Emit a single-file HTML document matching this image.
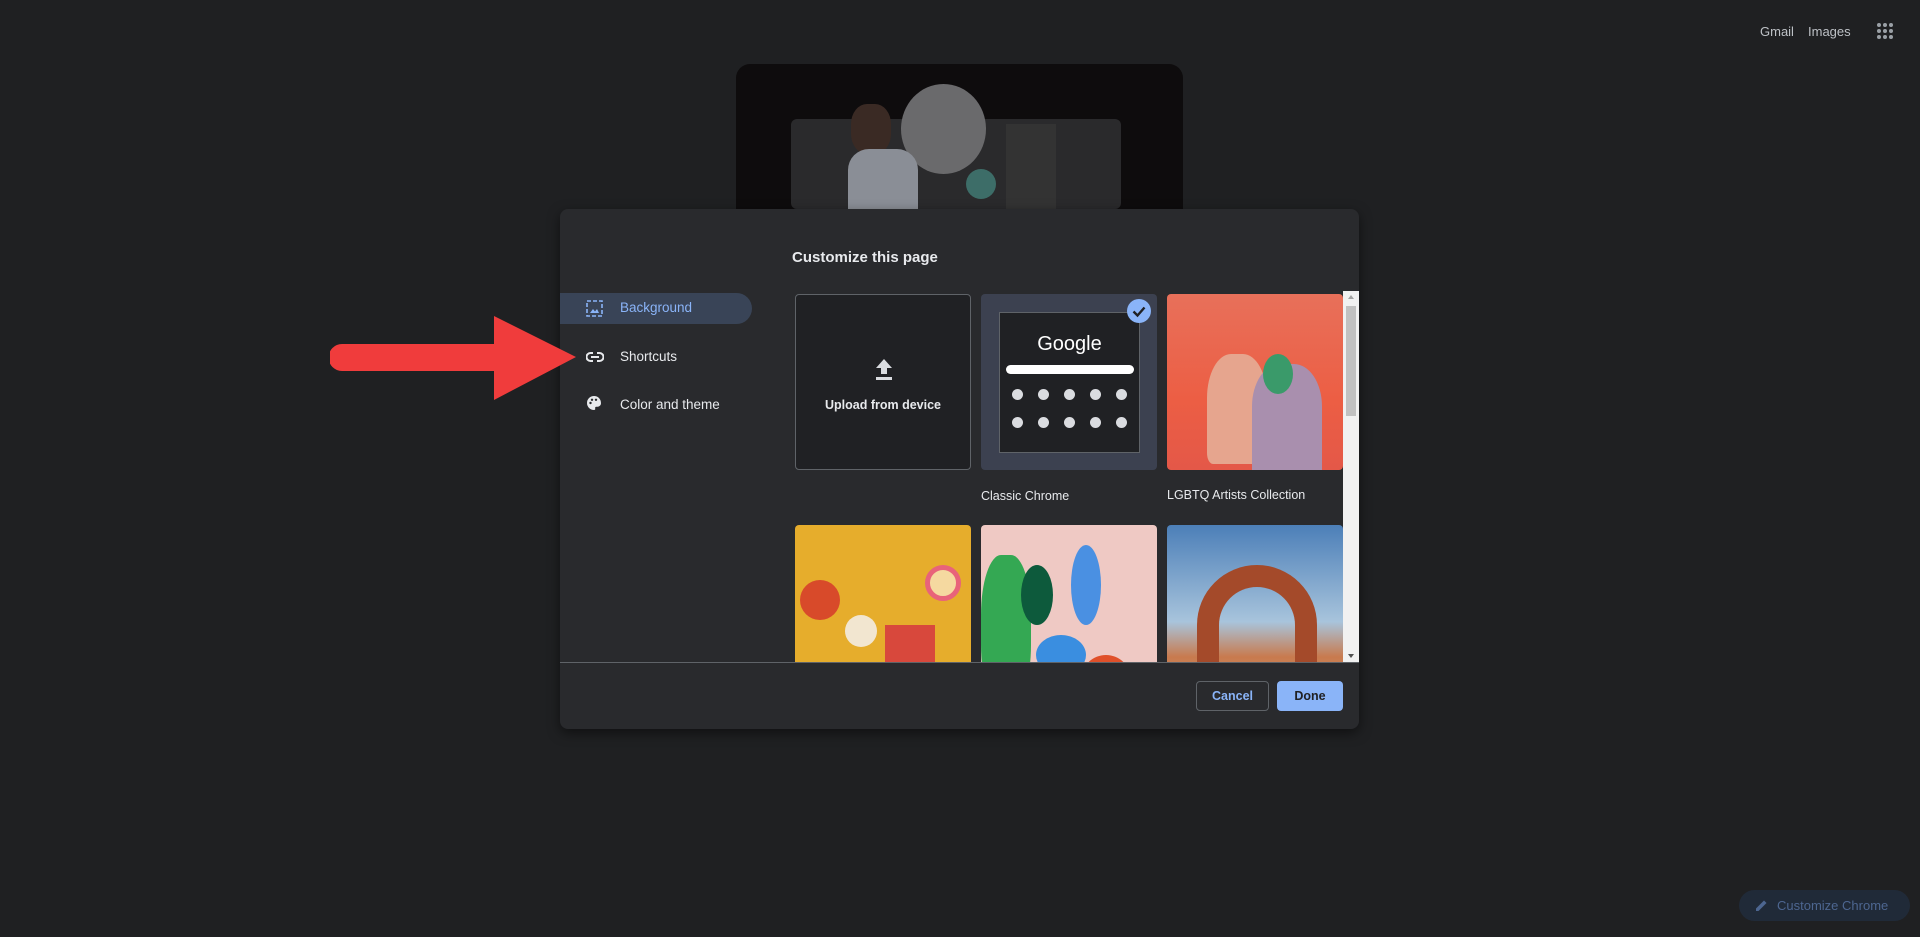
<!DOCTYPE html>
<html><head><meta charset="utf-8"><style>
*{margin:0;padding:0;box-sizing:border-box}
body{width:1920px;height:937px;background:#1f2022;font-family:"Liberation Sans",sans-serif;position:relative;overflow:hidden;color:#e8eaed}
.abs{position:absolute}
.top{font-size:13px;color:#bdc1c6;top:24px}
.dlg{left:560px;top:209px;width:799px;height:520px;background:#292a2d;border-radius:8px;box-shadow:0 4px 12px rgba(0,0,0,.5)}
.nav{font-size:13.5px;color:#e8eaed}
.tile{position:absolute;width:176px;height:176px;border-radius:4px;overflow:hidden}
.lbl{position:absolute;font-size:12.5px;color:#e8eaed}
.dot{position:absolute;width:11px;height:11px;border-radius:50%;background:#dadce0}
</style></head><body>
<div class="abs top" style="left:1760px">Gmail</div>
<div class="abs top" style="left:1808px">Images</div>
<svg class="abs" style="left:1876px;top:22px" width="18" height="18"><g fill="#9aa0a6"><circle cx="3" cy="3" r="2"/><circle cx="9" cy="3" r="2"/><circle cx="15" cy="3" r="2"/><circle cx="3" cy="9" r="2"/><circle cx="9" cy="9" r="2"/><circle cx="15" cy="9" r="2"/><circle cx="3" cy="15" r="2"/><circle cx="9" cy="15" r="2"/><circle cx="15" cy="15" r="2"/></g></svg>

<div class="abs" style="left:736px;top:64px;width:447px;height:160px;background:#0e0c0d;border-radius:14px;overflow:hidden">
 <div class="abs" style="left:55px;top:55px;width:330px;height:90px;background:#2a2a2c;border-radius:6px"></div>
 <div class="abs" style="left:165px;top:20px;width:85px;height:90px;border-radius:50%;background:#6a6a6c"></div>
 <div class="abs" style="left:115px;top:40px;width:40px;height:50px;border-radius:40%;background:#3a2a24"></div>
 <div class="abs" style="left:112px;top:85px;width:70px;height:70px;border-radius:30% 30% 0 0;background:#8a8e96"></div>
 <div class="abs" style="left:230px;top:105px;width:30px;height:30px;border-radius:50%;background:#3d6d68"></div>
 <div class="abs" style="left:270px;top:60px;width:50px;height:90px;background:#333"></div>
</div>

<div class="abs dlg">
 <div class="abs" style="left:232px;top:40px;font-size:15px;font-weight:bold;color:#e8eaed">Customize this page</div>
 <div class="abs" style="left:0;top:84px;width:192px;height:31px;background:#394457;border-radius:0 16px 16px 0"></div>
 <svg class="abs" style="left:26px;top:91px" width="17" height="17" viewBox="0 0 17 17"><rect x="1" y="1" width="15" height="15" fill="none" stroke="#8ab4f8" stroke-width="1.6" stroke-dasharray="4 2"/><path d="M4 13 L7 9 L9 11.5 L11 9 L13 13Z" fill="#8ab4f8"/></svg>
 <div class="abs nav" style="left:60px;top:91px;color:#8ab4f8">Background</div>
 <svg class="abs" style="left:26px;top:142px" width="18" height="12" viewBox="0 0 18 12"><path d="M7 2H4.5a4 4 0 0 0 0 8H7M11 2h2.5a4 4 0 0 1 0 8H11M5 6h8" fill="none" stroke="#e8eaed" stroke-width="2"/></svg>
 <div class="abs nav" style="left:60px;top:140px">Shortcuts</div>
 <svg class="abs" style="left:26px;top:186px" width="16" height="16" viewBox="0 0 16 16"><path d="M8 1a7 7 0 0 0 0 14c1 0 1.5-.7 1.2-1.5-.4-.9.2-1.8 1.2-1.8H12a3.5 3.5 0 0 0 3-3.5C15 4 12 1 8 1Z" fill="#e8eaed"/><circle cx="4.5" cy="8" r="1.2" fill="#292a2d"/><circle cx="6" cy="4.8" r="1.2" fill="#292a2d"/><circle cx="10" cy="4.8" r="1.2" fill="#292a2d"/></svg>
 <div class="abs nav" style="left:60px;top:188px">Color and theme</div>

 <div class="abs" style="left:0;top:82px;width:799px;height:371px;overflow:hidden">
  <div class="tile" style="left:235px;top:3px;border:1px solid #5f6368;background:#202124">
   <svg class="abs" style="left:78px;top:64px" width="20" height="22" viewBox="0 0 20 22"><path d="M10 0L2 9h5v6h6V9h5Z" fill="#dadce0"/><rect x="2" y="18" width="16" height="3" fill="#dadce0"/></svg>
   <div class="abs" style="left:0;width:174px;top:103px;text-align:center;font-size:12.5px;font-weight:bold">Upload from device</div>
  </div>
  <div class="tile" style="left:421px;top:3px;background:#3c4150">
   <div class="abs" style="left:18px;top:18px;width:141px;height:141px;background:#202124;border:1px solid #5f6368">
    <div class="abs" style="left:0;width:139px;top:20px;text-align:center;font-size:20px;color:#fff">Google</div>
    <div class="abs" style="left:6px;top:52px;width:128px;height:9px;border-radius:5px;background:#fff"></div>
    <div class="dot" style="left:12px;top:76px"></div><div class="dot" style="left:38px;top:76px"></div><div class="dot" style="left:64px;top:76px"></div><div class="dot" style="left:90px;top:76px"></div><div class="dot" style="left:116px;top:76px"></div>
    <div class="dot" style="left:12px;top:104px"></div><div class="dot" style="left:38px;top:104px"></div><div class="dot" style="left:64px;top:104px"></div><div class="dot" style="left:90px;top:104px"></div><div class="dot" style="left:116px;top:104px"></div>
   </div>
   <svg class="abs" style="left:146px;top:5px" width="24" height="24"><circle cx="12" cy="12" r="12" fill="#8ab4f8"/><path d="M6.5 12.5l4 4 7-8" fill="none" stroke="#202124" stroke-width="2.4"/></svg>
  </div>
  <div class="tile" style="left:607px;top:3px;background:linear-gradient(#e8705a,#ec5e44 60%,#e45848)">
   <div class="abs" style="left:40px;top:60px;width:60px;height:110px;border-radius:40% 40% 10% 10%;background:#e6a58e"></div>
   <div class="abs" style="left:85px;top:70px;width:70px;height:106px;border-radius:40% 40% 0 0;background:#a98fae"></div>
   <div class="abs" style="left:96px;top:60px;width:30px;height:40px;border-radius:50%;background:#3a9a6a"></div>
  </div>
  <div class="lbl" style="left:421px;top:198px">Classic Chrome</div>
  <div class="lbl" style="left:607px;top:197px">LGBTQ Artists Collection</div>
  <div class="tile" style="left:235px;top:234px;background:#e6ad2c">
   <div class="abs" style="left:5px;top:55px;width:40px;height:40px;border-radius:50%;background:#d84a2a"></div>
   <div class="abs" style="left:50px;top:90px;width:32px;height:32px;border-radius:50%;background:#f2e6d0"></div>
   <div class="abs" style="left:130px;top:40px;width:36px;height:36px;border-radius:50%;background:#f5d9a0;border:5px solid #e8637a"></div>
   <div class="abs" style="left:90px;top:100px;width:50px;height:60px;background:#d8483c"></div>
  </div>
  <div class="tile" style="left:421px;top:234px;background:#efc9c4">
   <div class="abs" style="left:0;top:30px;width:50px;height:150px;background:#34a853;border-radius:40%"></div>
   <div class="abs" style="left:90px;top:20px;width:30px;height:80px;background:#4a90e2;border-radius:50%"></div>
   <div class="abs" style="left:40px;top:40px;width:32px;height:60px;background:#0d5a3c;border-radius:50%"></div>
   <div class="abs" style="left:100px;top:130px;width:50px;height:50px;background:#e0502a;border-radius:50%"></div>
   <div class="abs" style="left:55px;top:110px;width:50px;height:40px;background:#3a8ee0;border-radius:50%"></div>
  </div>
  <div class="tile" style="left:607px;top:234px;background:linear-gradient(#4c7fb8,#a8c4dc 55%,#c87a4e 75%,#d89a6a)">
   <div class="abs" style="left:30px;top:40px;width:120px;height:110px;border:22px solid #a44a2a;border-bottom:none;border-radius:60px 60px 0 0"></div>
  </div>
 </div>
 <div class="abs" style="left:783px;top:82px;width:16px;height:371px;background:#f1f1f1">
  <div class="abs" style="left:3px;top:15px;width:10px;height:110px;background:#c1c1c1"></div>
  <div class="abs" style="left:5px;top:4px;border:3px solid transparent;border-bottom:4px solid #a3a3a3;border-top:none"></div>
  <div class="abs" style="left:5px;bottom:4px;border:3px solid transparent;border-top:4px solid #505050;border-bottom:none"></div>
 </div>
 <div class="abs" style="left:0;top:453px;width:799px;height:1px;background:#5f6368"></div>
 <div class="abs" style="left:636px;top:472px;width:73px;height:30px;border:1px solid #5f6368;border-radius:4px;color:#8ab4f8;font-size:12.5px;font-weight:bold;text-align:center;line-height:28px">Cancel</div>
 <div class="abs" style="left:717px;top:472px;width:66px;height:30px;background:#8ab4f8;border-radius:4px;color:#202124;font-size:12.5px;font-weight:bold;text-align:center;line-height:30px">Done</div>
</div>

<svg class="abs" style="left:330px;top:314px" width="250" height="88" viewBox="0 0 250 88"><path d="M12 30H164V2L246 43L164 86V57H12A13.5 13.5 0 0 1 12 30Z" fill="#f03c3c"/></svg>

<div class="abs" style="left:1739px;top:890px;width:171px;height:31px;background:#202a38;border-radius:16px;color:#4d6690;font-size:13px;line-height:31px;padding-left:38px">Customize Chrome</div>
<svg class="abs" style="left:1755px;top:899px" width="13" height="13" viewBox="0 0 13 13"><path d="M1 12V9.5L9 1.5l2.5 2.5L3.5 12Z" fill="#4d6690"/></svg>
</body></html>
